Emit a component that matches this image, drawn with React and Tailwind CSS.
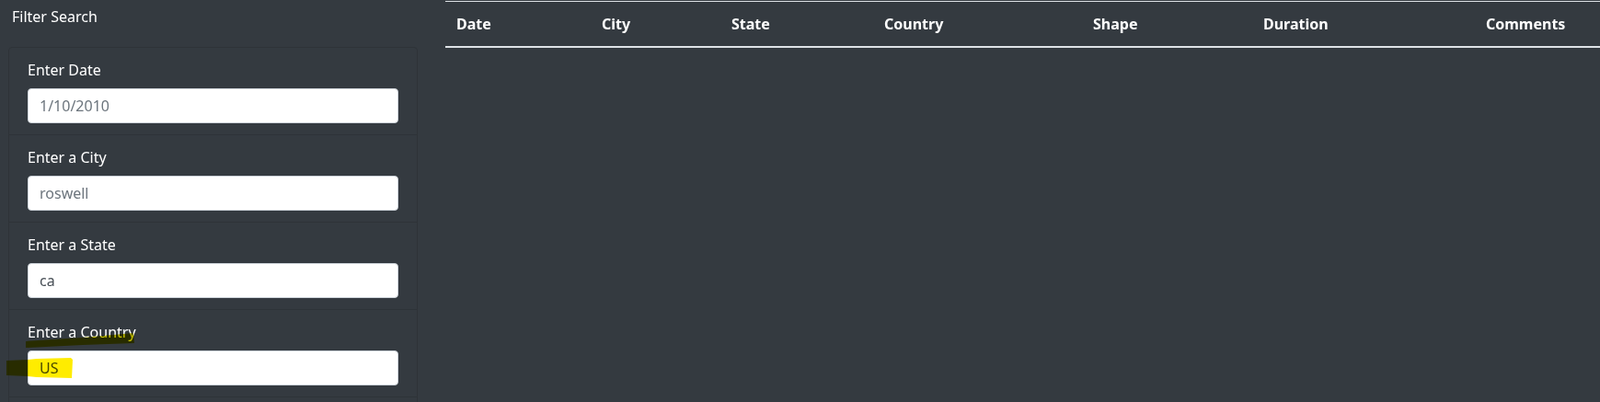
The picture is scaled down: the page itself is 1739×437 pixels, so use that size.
const filters = [
  { label: "Enter Date", placeholder: "1/10/2010" },
  { label: "Enter a City", placeholder: "roswell" },
  { label: "Enter a State", value: "ca" },
  { label: "Enter a Country", value: "US" },
];

const columns = [
  { name: "Date", w: "w-[158px]" },
  { name: "City", w: "w-[141px]" },
  { name: "State", w: "w-[166px]" },
  { name: "Country", w: "w-[227px]" },
  { name: "Shape", w: "w-[185px]" },
  { name: "Duration", w: "w-[242px]" },
  { name: "Comments", w: "w-[136px]" },
];

function FilterItem({ label, placeholder, value }) {
  return (
    <li className="px-5 py-3 border-b border-[#2e3338]">
      <label className="block mb-2 leading-6 text-white">{label}</label>
      <input
        type="text"
        readOnly
        placeholder={placeholder}
        defaultValue={value}
        className="block w-full h-[38px] px-3 bg-white border border-[#ced4da] rounded-[4px] text-[#495057] placeholder:text-[#6c757d] outline-none"
      />
    </li>
  );
}

export default function App() {
  return (
    <div
      className="relative flex h-[437px] bg-[#343a40] text-base overflow-hidden"
      style={{ fontFamily: '"Segoe UI", "Noto Sans", Arial, sans-serif' }}
    >
      {/* filter sidebar */}
      <aside className="w-[454px] shrink-0 pl-[9px]">
        <div className="h-[51px] pl-1 pt-[6px] leading-6 text-white">Filter Search</div>
        <ul className="border border-[#2e3338] rounded-[4px]">
          {filters.map((f) => (
            <FilterItem key={f.label} {...f} />
          ))}
          <li className="h-[40px]" aria-hidden="true" />
        </ul>
      </aside>

      {/* results table */}
      <main className="flex-1 ml-[30px] mt-px">
        <table className="w-full table-fixed border-collapse text-white">
          <thead>
            <tr>
              {columns.map((c) => (
                <th
                  key={c.name}
                  className={`${c.w} p-3 text-left font-bold leading-6 border-t border-b-2 border-[#dee2e6]`}
                >
                  {c.name}
                </th>
              ))}
            </tr>
          </thead>
          <tbody />
        </table>
      </main>

      {/* highlighter marks drawn over the screenshot */}
      <svg
        className="absolute left-0 top-0 w-[200px] h-[437px] pointer-events-none mix-blend-multiply"
        viewBox="0 0 200 437"
      >
        <polygon points="28,371 90,367 145,362 146,373 90,375 28,378" fill="#c4c000" />
        <polygon points="7,392 30,391 30,409 7,408" fill="#c4c000" />
        <polygon points="30,391 40,390 77,389 79,391 78,411 40,410 30,409" fill="#ffec00" />
      </svg>
    </div>
  );
}
